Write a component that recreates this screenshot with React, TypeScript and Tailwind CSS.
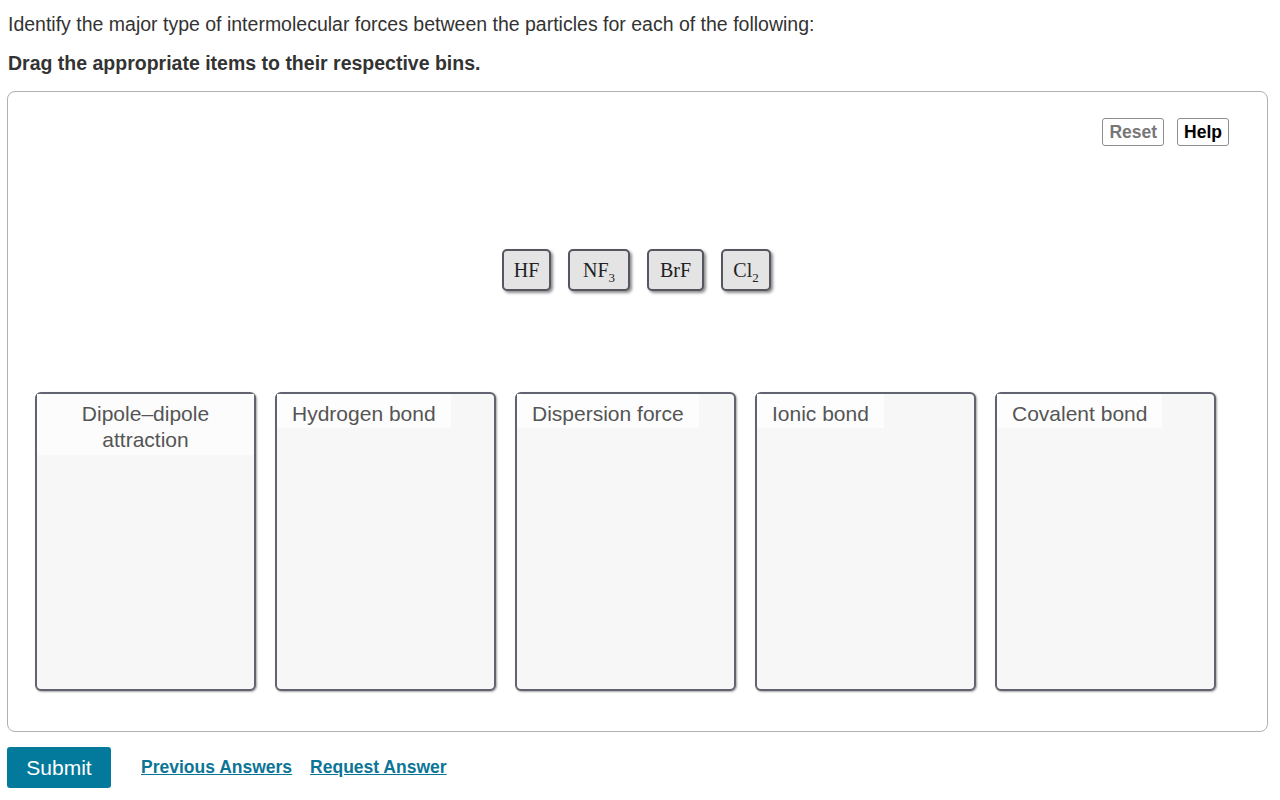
import React from "react";

const bins = [
  { label: "Dipole\u2013dipole attraction", full: true },
  { label: "Hydrogen bond" },
  { label: "Dispersion force" },
  { label: "Ionic bond" },
  { label: "Covalent bond" },
];

function Token({ children, w }: { children: React.ReactNode; w: string }) {
  return (
    <div
      className={`${w} h-[42px] flex items-center justify-center rounded-[5px] border-2 border-[#55565f] bg-[#e4e4e4] shadow-[2px_2px_3px_rgba(0,0,0,0.45)] text-[20px] text-[#222]`}
      style={{ fontFamily: '"Liberation Serif", "DejaVu Serif", serif' }}
    >
      {children}
    </div>
  );
}

export default function App() {
  return (
    <div
      className="w-[1280px] h-[800px] bg-white text-[#333] overflow-hidden"
      style={{ fontFamily: '"Liberation Sans", Arial, sans-serif' }}
    >
      <div className="pl-[8px] pt-[13px] text-[19.5px] leading-[22px]">
        Identify the major type of intermolecular forces between the particles for each of the following:
      </div>
      <div className="pl-[8px] pt-[17px] text-[19.5px] leading-[22px] font-bold">
        Drag the appropriate items to their respective bins.
      </div>
      <div className="ml-[7px] mt-[17px] w-[1261px] h-[641px] border border-[#b0b0b0] rounded-[8px] flex flex-col">
        <div className="flex justify-end gap-[13px] pt-[26px] pr-[38px]">
          <button className="h-[28px] px-[6px] border border-[#8a8f94] rounded-[3px] text-[17.5px] font-bold text-[#777]">
            Reset
          </button>
          <button className="h-[28px] px-[6px] border border-[#8a8f94] rounded-[3px] text-[17.5px] font-bold text-black">
            Help
          </button>
        </div>
        <div className="flex gap-[17px] mt-[103px] ml-[494px]">
          <Token w="w-[49px]">HF</Token>
          <Token w="w-[62px]">
            <span>
              NF<sub className="text-[13px] align-[-2px]">3</sub>
            </span>
          </Token>
          <Token w="w-[57px]">BrF</Token>
          <Token w="w-[50px]">
            <span>
              Cl<sub className="text-[13px] align-[-2px]">2</sub>
            </span>
          </Token>
        </div>
        <div className="flex gap-[19px] pl-[27px] mt-[101px]">
          {bins.map((b) => (
            <div
              key={b.label}
              className="w-[221px] h-[299px] border-2 border-[#626371] rounded-[6px] bg-[#f7f7f7] shadow-[1px_1px_2px_rgba(0,0,0,0.35)] flex flex-col items-start"
            >
              {b.full ? (
                <div className="w-full bg-[#fcfcfc] text-center text-[21px] leading-[26px] text-[#555] pt-[7px] pb-[2px] px-[10px]">
                  Dipole–dipole
                  <br />
                  attraction
                </div>
              ) : (
                <div className="bg-[#fdfdfd] text-[21px] leading-[26px] text-[#555] pt-[7px] pb-[1px] px-[15px]">
                  {b.label}
                </div>
              )}
            </div>
          ))}
        </div>
      </div>
      <div className="flex items-center mt-[15px] ml-[7px]">
        <button className="w-[104px] h-[41px] bg-[#037a9b] rounded-[3px] text-white text-[21px]">
          Submit
        </button>
        <a className="ml-[30px] text-[#0b7597] font-bold text-[17.5px] underline" href="#">
          Previous Answers
        </a>
        <a className="ml-[18px] text-[#0b7597] font-bold text-[17.5px] underline" href="#">
          Request Answer
        </a>
      </div>
    </div>
  );
}
